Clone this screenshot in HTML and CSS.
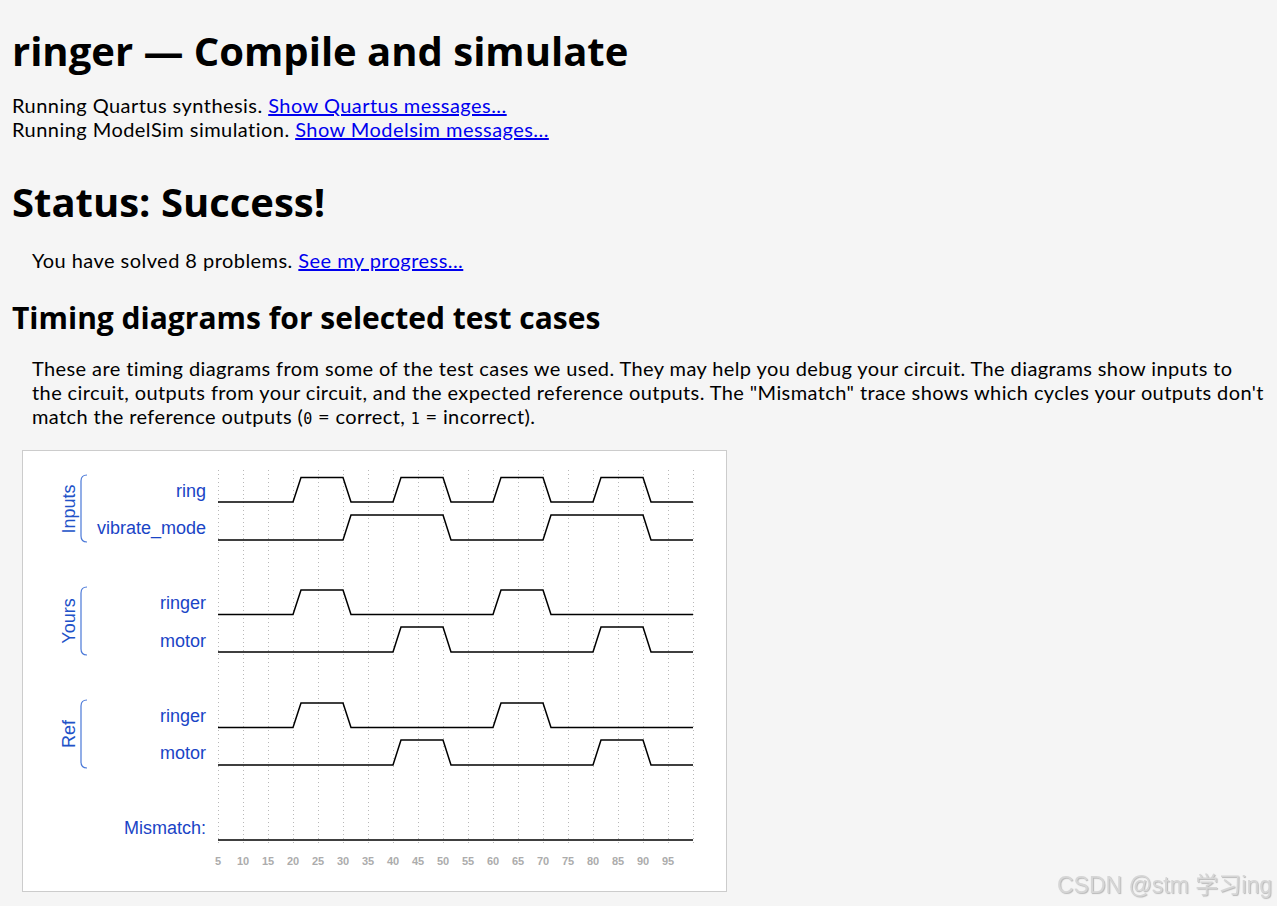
FILE: index.html
```html
<!DOCTYPE html>
<html lang="en">
<head>
<meta charset="utf-8">
<title>ringer — Compile and simulate</title>
<link rel="stylesheet" href="styles.css">
</head>
<body>
<main class="page">
  <h1 class="title">ringer — Compile and simulate</h1>
  <div class="log">
    <div class="log-line">Running Quartus synthesis. <a href="#">Show Quartus messages...</a></div>
    <div class="log-line">Running ModelSim simulation. <a href="#">Show Modelsim messages...</a></div>
  </div>
  <h1 class="status">Status: Success!</h1>
  <p class="indent solved">You have solved 8 problems. <a href="#">See my progress...</a></p>
  <h2 class="section">Timing diagrams for selected test cases</h2>
  <p class="indent desc">These are timing diagrams from some of the test cases we used. They may help you debug your circuit. The diagrams show inputs to<br>the circuit, outputs from your circuit, and the expected reference outputs. The "Mismatch" trace shows which cycles your outputs don't<br>match the reference outputs (<span class="code">0</span> = correct, <span class="code">1</span> = incorrect).</p>
  <div class="wave-box">
    <svg class="wave" width="703" height="440" viewBox="23 451 703 440" xmlns="http://www.w3.org/2000/svg">
      <g class="grid">
        <line x1="218.5" y1="470" x2="218.5" y2="844"/>
        <line x1="243.5" y1="470" x2="243.5" y2="844"/>
        <line x1="268.5" y1="470" x2="268.5" y2="844"/>
        <line x1="293.5" y1="470" x2="293.5" y2="844"/>
        <line x1="318.5" y1="470" x2="318.5" y2="844"/>
        <line x1="343.5" y1="470" x2="343.5" y2="844"/>
        <line x1="368.5" y1="470" x2="368.5" y2="844"/>
        <line x1="393.5" y1="470" x2="393.5" y2="844"/>
        <line x1="418.5" y1="470" x2="418.5" y2="844"/>
        <line x1="443.5" y1="470" x2="443.5" y2="844"/>
        <line x1="468.5" y1="470" x2="468.5" y2="844"/>
        <line x1="493.5" y1="470" x2="493.5" y2="844"/>
        <line x1="518.5" y1="470" x2="518.5" y2="844"/>
        <line x1="543.5" y1="470" x2="543.5" y2="844"/>
        <line x1="568.5" y1="470" x2="568.5" y2="844"/>
        <line x1="593.5" y1="470" x2="593.5" y2="844"/>
        <line x1="618.5" y1="470" x2="618.5" y2="844"/>
        <line x1="643.5" y1="470" x2="643.5" y2="844"/>
        <line x1="668.5" y1="470" x2="668.5" y2="844"/>
        <line x1="693.5" y1="470" x2="693.5" y2="844"/>
      </g>
      <g class="groups">
        <path d="M87 475 Q81 475 81 481 V536 Q81 542 87 542"/>
        <path d="M87 587 Q81 587 81 593 V649 Q81 655 87 655"/>
        <path d="M87 700 Q81 700 81 706 V762 Q81 768 87 768"/>
      </g>
      <g class="group-labels">
        <text x="75" y="509" transform="rotate(-90 75 509)">Inputs</text>
        <text x="75" y="621" transform="rotate(-90 75 621)">Yours</text>
        <text x="75" y="734" transform="rotate(-90 75 734)">Ref</text>
      </g>
      <g class="sig-labels">
        <text x="206" y="497">ring</text>
        <text x="206" y="534">vibrate_mode</text>
        <text x="206" y="609">ringer</text>
        <text x="206" y="647">motor</text>
        <text x="206" y="722">ringer</text>
        <text x="206" y="759">motor</text>
        <text x="206" y="834">Mismatch:</text>
      </g>
      <g class="traces">
        <path d="M218 502 H293 L301 477.5 H343 L351 502 H393 L401 477.5 H443 L451 502 H493 L501 477.5 H543 L551 502 H593 L601 477.5 H643 L651 502 H693"/>
        <path d="M218 540 H343 L351 515 H443 L451 540 H543 L551 515 H643 L651 540 H693"/>
        <path d="M218 614.5 H293 L301 590 H343 L351 614.5 H493 L501 590 H543 L551 614.5 H693"/>
        <path d="M218 652 H393 L401 627 H443 L451 652 H593 L601 627 H643 L651 652 H693"/>
        <path d="M218 727.5 H293 L301 703 H343 L351 727.5 H493 L501 703 H543 L551 727.5 H693"/>
        <path d="M218 765 H393 L401 740 H443 L451 765 H593 L601 740 H643 L651 765 H693"/>
        <path d="M218 840 H693"/>
      </g>
      <g class="axis">
        <text x="218" y="865">5</text>
        <text x="243" y="865">10</text>
        <text x="268" y="865">15</text>
        <text x="293" y="865">20</text>
        <text x="318" y="865">25</text>
        <text x="343" y="865">30</text>
        <text x="368" y="865">35</text>
        <text x="393" y="865">40</text>
        <text x="418" y="865">45</text>
        <text x="443" y="865">50</text>
        <text x="468" y="865">55</text>
        <text x="493" y="865">60</text>
        <text x="518" y="865">65</text>
        <text x="543" y="865">70</text>
        <text x="568" y="865">75</text>
        <text x="593" y="865">80</text>
        <text x="618" y="865">85</text>
        <text x="643" y="865">90</text>
        <text x="668" y="865">95</text>
      </g>
    </svg>
  </div>
</main>
<div class="watermark">CSDN @stm 学习ing</div>
</body>
</html>
```
FILE: styles.css
```css
html, body {
  margin: 0;
  padding: 0;
}
body {
  background: #f5f5f5;
  color: #000;
  font-family: Lato, "Noto Sans", sans-serif;
  font-size: 20px;
  line-height: 24px;
  letter-spacing: 0.45px;
  height: 906px;
  overflow: hidden;
}
.page {
  padding: 0 12px;
  display: flex;
  flex-direction: column;
  align-items: flex-start;
}
a {
  color: #0000ee;
  text-decoration: underline;
}
.title, .status {
  font-family: "Open Sans", sans-serif;
  font-weight: 700;
  font-size: 40px;
  line-height: 54px;
  letter-spacing: 0;
  margin: 0;
}
.title {
  margin-top: 24px;
}
.log {
  margin-top: 15px;
}
.status {
  margin-top: 34px;
}
.indent {
  margin: 0;
  padding-left: 20px;
}
.solved {
  margin-top: 19px;
}
.section {
  font-family: "Open Sans", sans-serif;
  font-weight: 700;
  font-size: 30px;
  line-height: 40px;
  letter-spacing: 0;
  margin: 26px 0 0 0;
}
.desc {
  margin-top: 18px;
  white-space: nowrap;
  letter-spacing: 0.4px;
}
.code {
  font-family: "DejaVu Sans Mono", monospace;
  font-size: 15px;
  letter-spacing: 0;
}
.wave-box {
  margin: 19px 0 0 10px;
  background: #fff;
  border: 1px solid #cccccc;
  width: 703px;
  height: 440px;
}
.wave {
  display: block;
}
.grid line {
  stroke: #b8b8b8;
  stroke-width: 1;
  stroke-dasharray: 1 3;
}
.groups path {
  fill: none;
  stroke: #4a78d8;
  stroke-width: 1.2;
}
.group-labels text {
  font-family: "Liberation Sans", Arial, sans-serif;
  font-size: 18px;
  letter-spacing: 0;
  fill: #2152c8;
  text-anchor: middle;
}
.sig-labels text {
  font-family: "Liberation Sans", Arial, sans-serif;
  font-size: 18px;
  letter-spacing: 0;
  fill: #1a44c6;
  text-anchor: end;
}
.traces path {
  fill: none;
  stroke: #000;
  stroke-width: 1.5;
  stroke-linejoin: miter;
}
.axis text {
  font-family: "Liberation Sans", Arial, sans-serif;
  font-size: 11px;
  font-weight: 700;
  letter-spacing: 0;
  fill: #acacac;
  text-anchor: middle;
}
.watermark {
  position: fixed;
  right: 5px;
  bottom: 7px;
  font-family: "Liberation Sans", "Noto Sans CJK SC", sans-serif;
  font-size: 23px;
  line-height: 28px;
  letter-spacing: 0;
  color: #d6d6d6;
  text-shadow: 1px 1px 1px #b8b8b8;
}
```
